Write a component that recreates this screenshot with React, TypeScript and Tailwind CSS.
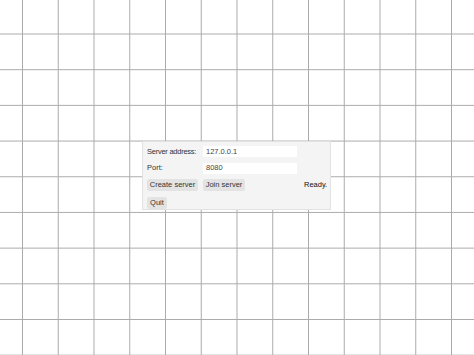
export default function App() {
  return (
    <main className="h-[355px] w-[474px] overflow-hidden bg-white bg-[linear-gradient(to_right,#ababab_1px,transparent_1px),linear-gradient(to_bottom,#ababab_1px,transparent_1px)] bg-[size:35.75px_35.7px] bg-[position:22px_33.5px] pl-[142px] pt-[141px] font-['Liberation_Sans',Arial,sans-serif] text-[7.5px] text-[#333]">
      <div className="grid h-[69px] w-[189px] grid-cols-[51px_94px_auto] grid-rows-[11px_11px_12px_12px] content-start items-center gap-x-[5px] gap-y-[5.5px] whitespace-nowrap border border-[#e2e2e2] bg-[#f4f4f4] pl-[4px] pt-[4px]">
        <span className="tracking-[-0.25px]">Server address:</span>
        <div className="flex h-full items-center bg-white pl-[3px] text-[#444]">127.0.0.1</div>
        <span />

        <span>Port:</span>
        <div className="flex h-full items-center bg-white pl-[3px] text-[#444]">8080</div>
        <span />

        <button type="button" className="flex h-full items-center justify-center rounded-[2px] bg-[#e3e3e3] text-[#333]">
          Create server
        </button>
        <button type="button" className="flex h-full w-[42px] items-center justify-center rounded-[2px] bg-[#e3e3e3] text-[#333]">
          Join server
        </button>
        <span className="pl-[2px] text-[#111]">Ready.</span>

        <button type="button" className="flex h-full w-[20px] items-center justify-center rounded-[2px] bg-[#e3e3e3] text-[#333]">
          Quit
        </button>
      </div>
    </main>
  );
}
